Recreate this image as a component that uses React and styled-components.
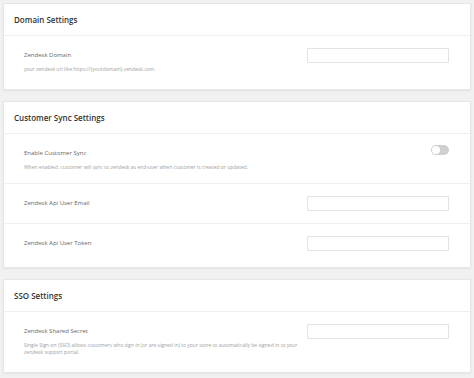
import React from "react";
import styled, { createGlobalStyle } from "styled-components";

const GlobalStyle = createGlobalStyle`
    html, body {
        margin: 0;
        padding: 0;
        background: #f1f1f1;
    }
    body {
        font-family: "Open Sans", "Liberation Sans", sans-serif;
    }
`;

const sections = [
    {
        title: "Domain Settings",
        fields: [
            {
                label: "Zendesk Domain",
                hint: "your zendesk url like https://{yourdomain}.zendesk.com.",
                kind: "input",
            },
        ],
    },
    {
        title: "Customer Sync Settings",
        fields: [
            {
                label: "Enable Customer Sync",
                hint: "When enabled, customer will sync to zendesk as end-user when customer is created or updated.",
                kind: "toggle",
            },
            { label: "Zendesk Api User Email", kind: "input" },
            { label: "Zendesk Api User Token", kind: "input" },
        ],
    },
    {
        title: "SSO Settings",
        fields: [
            {
                label: "Zendesk Shared Secret",
                hint: "Single Sign-on (SSO) allows customers who sign in (or are signed in) to your store to automatically be signed in to your zendesk support portal.",
                kind: "input",
            },
        ],
    },
];

const App = () => {
    return (
        <>
            <GlobalStyle />
            <Page>
                {sections.map((section) => (
                    <Card key={section.title}>
                        <CardHeader>{section.title}</CardHeader>
                        {section.fields.map((field) => (
                            <Row key={field.label}>
                                <Info>
                                    <Label>{field.label}</Label>
                                    {field.hint && <Hint>{field.hint}</Hint>}
                                </Info>
                                {field.kind === "toggle" ? (
                                    <Toggle>
                                        <Knob />
                                    </Toggle>
                                ) : (
                                    <Input type="text" />
                                )}
                            </Row>
                        ))}
                    </Card>
                ))}
            </Page>
        </>
    );
};

export default App;

const Page = styled.div`
    display: flex;
    flex-direction: column;
    gap: 11px;
    padding: 3px 3px 6px 3px;
`;

const Card = styled.div`
    background: #fff;
    border: 1px solid #e6e6e6;
    box-shadow: 0 1px 2px rgba(0, 0, 0, 0.06);
    padding-bottom: 4px;
`;

const CardHeader = styled.div`
    padding: 10px 10px 10px;
    border-bottom: 1px solid #efefef;
    font-size: 8px;
    line-height: 11px;
    font-weight: 600;
    color: #333;
`;

const Row = styled.div`
    display: flex;
    align-items: flex-start;
    gap: 4px;
    padding: 12px 21px 12px 20px;
    & + & {
        border-top: 1px solid #f0f0f0;
    }
`;

const Info = styled.div`
    flex: 1;
    min-width: 0;
`;

const Label = styled.div`
    font-size: 6px;
    line-height: 15px;
    color: #666;
`;

const Hint = styled.div`
    margin-top: 3px;
    font-size: 5px;
    line-height: 7px;
    color: #a0a0a0;
`;

const Input = styled.input`
    box-sizing: border-box;
    width: 142px;
    height: 15px;
    margin: 0;
    padding: 0 4px;
    border: 1px solid #e2e2e2;
    border-radius: 1px;
    background: #fff;
    outline: none;
`;

const Toggle = styled.div`
    box-sizing: border-box;
    width: 18px;
    height: 10px;
    margin-top: -1px;
    border-radius: 5px;
    background: #cfcfcf;
    padding: 1px;
`;

const Knob = styled.div`
    width: 8px;
    height: 8px;
    border-radius: 50%;
    background: #fff;
`;
